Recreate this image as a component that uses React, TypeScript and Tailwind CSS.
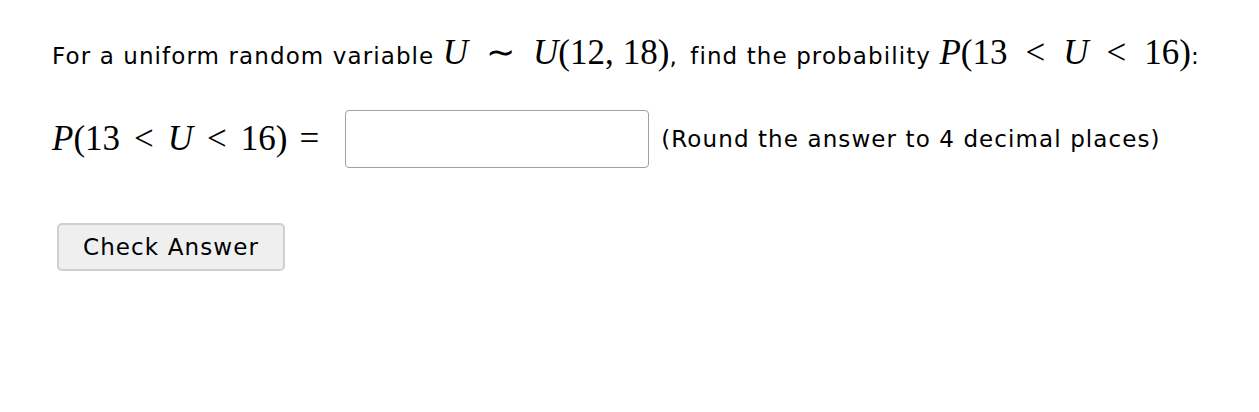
const mathFont = "font-['Liberation_Serif',serif] text-[35px] tracking-normal";

function Rel({ children, wide }: { children: React.ReactNode; wide?: boolean }) {
    return <span className={wide ? "mx-[18px]" : "mx-[14px]"}>{children}</span>;
}

function Prob({ wide }: { wide?: boolean }) {
    return (
        <span className={`${mathFont} whitespace-nowrap`}>
            <i>P</i>(13<Rel wide={wide}>&lt;</Rel><i>U</i><Rel wide={wide}>&lt;</Rel>16)
        </span>
    );
}

export default function App() {
    return (
        <div className="w-[1259px] h-[412px] bg-white text-black font-['DejaVu_Sans',sans-serif] text-[23px] tracking-[1.1px] pl-[52px] pt-[31px]">
            <p className="leading-[44px] whitespace-nowrap">
                For a uniform random variable{" "}
                <span className={mathFont}>
                    <i>U</i>
                    <Rel wide>∼</Rel>
                    <i>U</i>(12,<span className="ml-[9px]" />18)
                </span>
                ,<span className="ml-[4px]"> find the probability </span>
                <Prob wide />:
            </p>
            <div className="flex items-center mt-[32px] h-[58px]">
                <Prob />
                <span className={`${mathFont} ml-[12px]`}>=</span>
                <input
                    type="text"
                    className="ml-[26px] w-[304px] h-[58px] border border-[#a0a0a0] rounded-[4px] outline-none"
                />
                <span className="ml-[12px]">(Round the answer to 4 decimal places)</span>
            </div>
            <button className="mt-[55px] ml-[5px] w-[228px] h-[48px] bg-[#efefef] border-2 border-[#cfcfcf] rounded-[5px] text-[23px] tracking-[1.1px]">
                Check Answer
            </button>
        </div>
    );
}
